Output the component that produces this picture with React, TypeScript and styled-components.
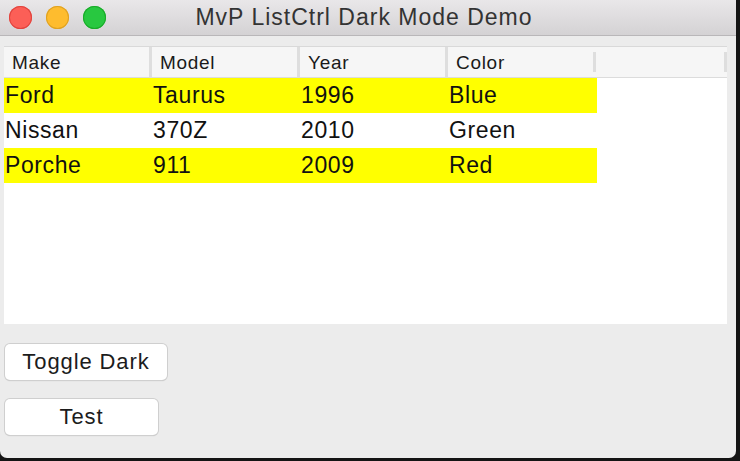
import React from "react";
import styled, { createGlobalStyle } from "styled-components";

const Global = createGlobalStyle`
  html, body { margin: 0; padding: 0; background: #141414; }
  body { width: 740px; height: 461px; overflow: hidden; font-family: "Liberation Sans", "Helvetica", Arial, sans-serif; }
`;

const Window = styled.div`
  width: 736px;
  height: 458px;
  background: #ececec;
  border-radius: 0 0 7px 7px;
  overflow: hidden;
  display: flex;
  flex-direction: column;
`;

const TitleBar = styled.div`
  height: 35px;
  flex: none;
  background: linear-gradient(#e9e7e9, #d4d2d4);
  border-bottom: 1px solid #b9b7b9;
  display: flex;
  align-items: center;
  position: relative;
  padding-left: 9px;
  gap: 14px;
`;

const Light = styled.span<{ $c: string; $b: string }>`
  width: 23px;
  height: 23px;
  border-radius: 50%;
  background: ${(p) => p.$c};
  box-shadow: inset 0 0 0 1px ${(p) => p.$b};
  flex: none;
`;

const Title = styled.div`
  position: absolute;
  left: 0;
  right: 0;
  top: 0;
  bottom: 0;
  display: flex;
  align-items: center;
  justify-content: center;
  padding-right: 8px;
  font-size: 23px;
  letter-spacing: 1px;
  color: #333333;
  pointer-events: none;
`;

const Body = styled.div`
  flex: 1;
  padding: 10px 9px 0 4px;
  display: flex;
  flex-direction: column;
`;

const List = styled.div`
  height: 277px;
  background: #ffffff;
  border-top: 1px solid #d9d9d9;
  display: flex;
  flex-direction: column;
`;

const Header = styled.div`
  height: 30px;
  background: #f6f6f6;
  border-bottom: 1px solid #dcdcdc;
  display: grid;
  grid-template-columns: repeat(4, 148px) 1fr;
  align-items: center;
`;

const HeadCell = styled.div<{ $first?: boolean }>`
  height: 100%;
  display: flex;
  align-items: center;
  padding-left: 8px;
  font-size: 19px;
  letter-spacing: 0.7px;
  color: #1a1a1a;
  border-left: ${(p) => (p.$first ? "none" : "3px solid #dedede")};
  margin-left: ${(p) => (p.$first ? "0" : "-3px")};
  box-sizing: border-box;
  padding-top: 2px;
  &:last-child { border-right: 3px solid #dedede; height: 20px; }
`;

const Row = styled.div<{ $hl: boolean }>`
  height: 35px;
  display: grid;
  grid-template-columns: repeat(4, 148px);
  width: 593px;
  background: ${(p) => (p.$hl ? "#ffff00" : "#ffffff")};
  align-items: center;
  &:first-of-type { margin-top: 1px; }
`;

const Cell = styled.div`
  font-size: 23px;
  letter-spacing: 0.6px;
  color: #111;
  padding-left: 1px;
`;

const Buttons = styled.div`
  display: flex;
  flex-direction: column;
  align-items: flex-start;
  gap: 19px;
  margin-top: 20px;
  padding-left: 1px;
`;

const Button = styled.button<{ $w: number }>`
  width: ${(p) => p.$w}px;
  height: 36px;
  background: #ffffff;
  border: none;
  border-radius: 5px;
  box-shadow: 0 0 0 1px #cfcfcf, 0 1px 1px #bdbdbd;
  font-family: inherit;
  font-size: 22px;
  letter-spacing: 0.9px;
  color: #1c1c1c;
  padding: 0;
`;

const rows = [
  ["Ford", "Taurus", "1996", "Blue"],
  ["Nissan", "370Z", "2010", "Green"],
  ["Porche", "911", "2009", "Red"],
];

export default function App() {
  return (
    <>
      <Global />
      <Window>
        <TitleBar>
          <Light $c="#fc5f57" $b="#e0443e" />
          <Light $c="#febc2e" $b="#dea123" />
          <Light $c="#28c840" $b="#1aab29" />
          <Title>MvP ListCtrl Dark Mode Demo</Title>
        </TitleBar>
        <Body>
          <List>
            <Header>
              <HeadCell $first>Make</HeadCell>
              <HeadCell>Model</HeadCell>
              <HeadCell>Year</HeadCell>
              <HeadCell>Color</HeadCell>
              <HeadCell />
            </Header>
            {rows.map((r, i) => (
              <Row key={i} $hl={i !== 1}>
                {r.map((c, j) => (
                  <Cell key={j}>{c}</Cell>
                ))}
              </Row>
            ))}
          </List>
          <Buttons>
            <Button $w={162}>Toggle Dark</Button>
            <Button $w={153}>Test</Button>
          </Buttons>
        </Body>
      </Window>
    </>
  );
}
